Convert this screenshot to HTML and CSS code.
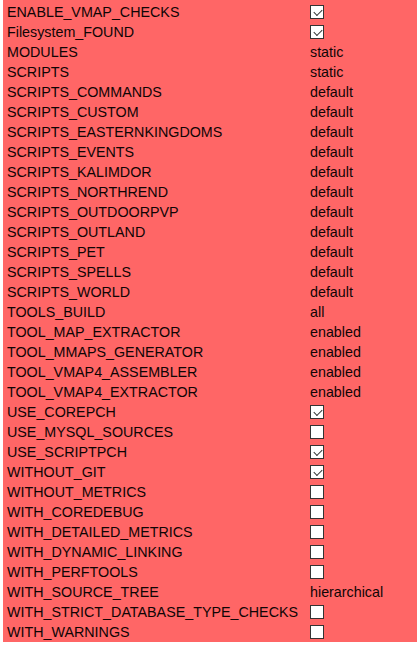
FILE: index.html
```html
<!DOCTYPE html>
<html>
<head>
<meta charset="utf-8">
<link rel="stylesheet" href="styles.css">
</head>
<body>
<div class="table">
  <div class="row"><span class="k">ENABLE_VMAP_CHECKS</span><span class="v"><span class="cb on"></span></span></div>
  <div class="row"><span class="k">Filesystem_FOUND</span><span class="v"><span class="cb on"></span></span></div>
  <div class="row"><span class="k">MODULES</span><span class="v">static</span></div>
  <div class="row"><span class="k">SCRIPTS</span><span class="v">static</span></div>
  <div class="row"><span class="k">SCRIPTS_COMMANDS</span><span class="v">default</span></div>
  <div class="row"><span class="k">SCRIPTS_CUSTOM</span><span class="v">default</span></div>
  <div class="row"><span class="k">SCRIPTS_EASTERNKINGDOMS</span><span class="v">default</span></div>
  <div class="row"><span class="k">SCRIPTS_EVENTS</span><span class="v">default</span></div>
  <div class="row"><span class="k">SCRIPTS_KALIMDOR</span><span class="v">default</span></div>
  <div class="row"><span class="k">SCRIPTS_NORTHREND</span><span class="v">default</span></div>
  <div class="row"><span class="k">SCRIPTS_OUTDOORPVP</span><span class="v">default</span></div>
  <div class="row"><span class="k">SCRIPTS_OUTLAND</span><span class="v">default</span></div>
  <div class="row"><span class="k">SCRIPTS_PET</span><span class="v">default</span></div>
  <div class="row"><span class="k">SCRIPTS_SPELLS</span><span class="v">default</span></div>
  <div class="row"><span class="k">SCRIPTS_WORLD</span><span class="v">default</span></div>
  <div class="row"><span class="k">TOOLS_BUILD</span><span class="v">all</span></div>
  <div class="row"><span class="k">TOOL_MAP_EXTRACTOR</span><span class="v">enabled</span></div>
  <div class="row"><span class="k">TOOL_MMAPS_GENERATOR</span><span class="v">enabled</span></div>
  <div class="row"><span class="k">TOOL_VMAP4_ASSEMBLER</span><span class="v">enabled</span></div>
  <div class="row"><span class="k">TOOL_VMAP4_EXTRACTOR</span><span class="v">enabled</span></div>
  <div class="row"><span class="k">USE_COREPCH</span><span class="v"><span class="cb on"></span></span></div>
  <div class="row"><span class="k">USE_MYSQL_SOURCES</span><span class="v"><span class="cb"></span></span></div>
  <div class="row"><span class="k">USE_SCRIPTPCH</span><span class="v"><span class="cb on"></span></span></div>
  <div class="row"><span class="k">WITHOUT_GIT</span><span class="v"><span class="cb on"></span></span></div>
  <div class="row"><span class="k">WITHOUT_METRICS</span><span class="v"><span class="cb"></span></span></div>
  <div class="row"><span class="k">WITH_COREDEBUG</span><span class="v"><span class="cb"></span></span></div>
  <div class="row"><span class="k">WITH_DETAILED_METRICS</span><span class="v"><span class="cb"></span></span></div>
  <div class="row"><span class="k">WITH_DYNAMIC_LINKING</span><span class="v"><span class="cb"></span></span></div>
  <div class="row"><span class="k">WITH_PERFTOOLS</span><span class="v"><span class="cb"></span></span></div>
  <div class="row"><span class="k">WITH_SOURCE_TREE</span><span class="v">hierarchical</span></div>
  <div class="row"><span class="k">WITH_STRICT_DATABASE_TYPE_CHECKS</span><span class="v"><span class="cb"></span></span></div>
  <div class="row"><span class="k">WITH_WARNINGS</span><span class="v"><span class="cb"></span></span></div>
</div>
</body>
</html>
```
FILE: styles.css
```css
html, body {
  margin: 0;
  padding: 0;
  background: #ffffff;
}
body {
  font-family: "Liberation Sans", Arial, sans-serif;
  font-size: 14.3px;
  color: #100505;
}
.table {
  margin-left: 3px;
  width: 414px;
  background: #ff6666;
  padding-top: 2px;
  box-sizing: border-box;
  height: 642px;
}
.row {
  display: grid;
  grid-template-columns: 307px 1fr;
  height: 20px;
  align-items: center;
}
.k {
  padding-left: 4px;
  white-space: nowrap;
  line-height: 20px;
}
.v {
  display: flex;
  align-items: center;
  line-height: 20px;
}
.cb {
  display: block;
  width: 14px;
  height: 14px;
  box-sizing: border-box;
  border: 1px solid #333333;
  background: #ffffff;
  position: relative;
}
.cb.on::after {
  content: "";
  position: absolute;
  left: 3px;
  top: 3px;
  width: 7px;
  height: 4px;
  border-left: 1.7px solid #333333;
  border-bottom: 1.7px solid #333333;
  transform: rotate(-45deg);
  transform-origin: center;
}
```
